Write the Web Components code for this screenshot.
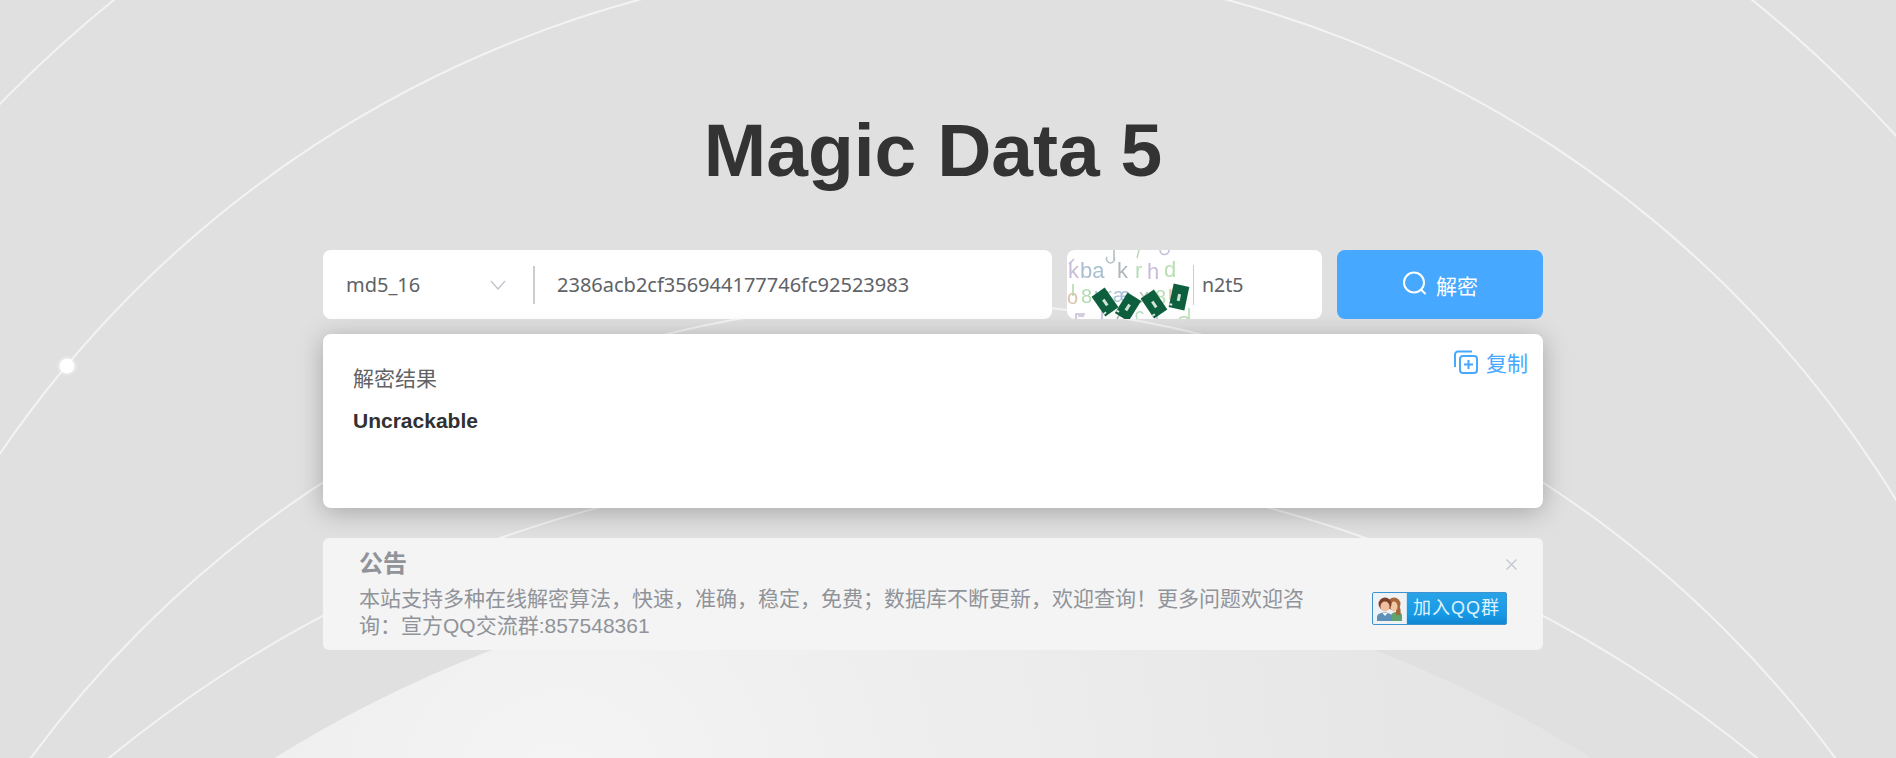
<!doctype html>
<html lang="zh">
  <head>
    <meta charset="UTF-8" />
    <title>Magic Data 5</title>
    <style>
      html, body {
        margin: 0;
        height: 100%;
        overflow: hidden;
        background: #e0e0e0;
      }
    </style>
  </head>
  <body>
    <md-app>
      <md-search-bar></md-search-bar>
      <md-result-card label="解密结果" value="Uncrackable"></md-result-card>
      <md-notice heading="公告">
        本站支持多种在线解密算法，快速，准确，稳定，免费；数据库不断更新，欢迎查询！更多问题欢迎咨询：宣方QQ交流群:857548361
      </md-notice>
    </md-app>

    <script type="module">
      const UI_FONT = `"Noto Sans", "Noto Sans CJK SC", sans-serif`;
      const ARIAL_FONT = `"Liberation Sans", "Noto Sans CJK SC", sans-serif`;

      class MdBackground extends HTMLElement {
        constructor() {
          super();
          this.attachShadow({ mode: "open" });
          this.shadowRoot.innerHTML = `
            <style>
              :host { position: absolute; inset: 0; display: block; z-index: 0; }
              svg { display: block; }
            </style>
            <svg width="1896" height="758" viewBox="0 0 1896 758">
              <defs>
                <radialGradient id="globe" gradientUnits="userSpaceOnUse" cx="560" cy="800" r="1080">
                  <stop offset="0" stop-color="#f4f4f4" />
                  <stop offset="0.45" stop-color="#ececec" />
                  <stop offset="1" stop-color="#e3e3e3" />
                </radialGradient>
              </defs>
              <rect width="1896" height="758" fill="#e0e0e0" />
              <circle cx="933" cy="1810" r="1241" fill="url(#globe)" />
              <g fill="none" stroke="#fff" stroke-opacity="0.62" stroke-width="2">
                <circle cx="933" cy="1012" r="1302" />
                <circle cx="933" cy="1091" r="1130" />
                <circle cx="933" cy="1422" r="1120" />
                <circle cx="933" cy="1766" r="1302" />
              </g>
              <circle cx="67" cy="366" r="10" fill="#fff" fill-opacity="0.22" />
              <circle cx="67" cy="366" r="7.5" fill="#fff" />
            </svg>
          `;
        }
      }

      class MdApp extends HTMLElement {
        constructor() {
          super();
          this.attachShadow({ mode: "open" });
          this.shadowRoot.innerHTML = `
            <style>
              :host {
                display: block;
                position: relative;
                width: 1896px;
                height: 758px;
                overflow: hidden;
              }
              .page {
                position: relative;
                z-index: 1;
                box-sizing: border-box;
                width: 1866px;
                display: flex;
                flex-direction: column;
                align-items: center;
              }
              h1 {
                margin: 108px 0 0;
                height: 142px;
                font: bold 75px/84px ${ARIAL_FONT};
                color: #333;
              }
              .stack {
                width: 1220px;
                display: flex;
                flex-direction: column;
              }
            </style>
            <md-background></md-background>
            <div class="page">
              <h1>Magic Data 5</h1>
              <div class="stack"><slot></slot></div>
            </div>
          `;
        }
      }

      class MdSearchBar extends HTMLElement {
        constructor() {
          super();
          this.attachShadow({ mode: "open" });
          this.shadowRoot.innerHTML = `
            <style>
              :host {
                display: flex;
                gap: 15px;
                height: 69px;
                font: 20px ${UI_FONT};
                color: #606266;
              }
              .box {
                background: #fff;
                border-radius: 8px;
                display: flex;
                align-items: center;
                overflow: hidden;
              }
              .main { width: 729px; }
              .algo {
                width: 212px;
                box-sizing: border-box;
                padding: 0 27px 0 23px;
                display: flex;
                align-items: center;
                justify-content: space-between;
                height: 38px;
                border-right: 2px solid #ccc;
              }
              .hash { padding-left: 22px; white-space: nowrap; }
              .code { width: 255px; }
              .code md-captcha { flex: none; }
              .answer {
                margin-left: 3px;
                padding-left: 8px;
                height: 40px;
                line-height: 40px;
                font-size: 19.5px;
                border-left: 1px solid #ccc;
              }
              .go {
                width: 206px;
                background: #46a8ff;
                color: #fff;
                justify-content: center;
                gap: 9px;
                font-size: 21px;
              }
              .go svg { display: block; margin-top: -3px; }
            </style>
            <div class="box main">
              <div class="algo">
                <span>md5_16</span>
                <svg width="16" height="10" viewBox="0 0 16 10" fill="none" stroke="#c0c4cc" stroke-width="1.3">
                  <path d="M1 1l7 8 7-8" />
                </svg>
              </div>
              <div class="hash">2386acb2cf356944177746fc92523983</div>
            </div>
            <div class="box code">
              <md-captcha></md-captcha>
              <div class="answer">n2t5</div>
            </div>
            <div class="box go">
              <svg width="25" height="25" viewBox="0 0 25 25" fill="none" stroke="#fff" stroke-width="2">
                <circle cx="12" cy="11.5" r="10" />
                <path d="M19.5 19l3.5 3.5" stroke-linecap="round" />
              </svg>
              <span>解密</span>
            </div>
          `;
        }
      }

      class MdCaptcha extends HTMLElement {
        constructor() {
          super();
          this.attachShadow({ mode: "open" });
          // two rows of noise letters, stray strokes at the edges, then the four dark blocks
          const noise = [
            ["k", 1, 28, 22, "#c9bcd8"], ["ba", 13, 28, 22, "#a9bfd0"], ["k", 50, 28, 22, "#b0b8bc"],
            ["r", 68, 28, 22, "#b8dcb8"], ["h", 80, 29, 22, "#c8bcdc"], ["d", 97, 27, 22, "#b8e0b0"],
            ["o", 0, 54, 20, "#d8c4a8"], ["8", 14, 53, 20, "#b0dcb0"], ["u", 27, 52, 20, "#a8bccc"],
            ["r", 38, 52, 20, "#b0c0b0"], ["æ", 46, 52, 20, "#a8c4d8"], ["x", 72, 53, 20, "#b0c8b8"],
            ["8", 88, 54, 20, "#b8e0b0"], ["r", 101, 50, 20, "#d8c8a8"], ["c", 110, 52, 20, "#b8e0c0"]
          ];
          const letters = noise
            .map(([t, x, y, s, c]) => `<text x="${x}" y="${y}" font-size="${s}" fill="${c}">${t}</text>`)
            .join("");
          const strokes = [
            ["M47 0v10M40 7a4 4 0 1 0 7 0", "#b5c0c0"], ["M72 0l-2 8", "#b8dcb8"],
            ["M93 0a4 4 0 0 0 9 0", "#c8bcdc"], ["M9 69v-5h9M11 66h6", "#c8c0d8"],
            ["M35 69v-8", "#c8bcdc"], ["M50 69l5-9", "#b0b8bc"], ["M70 69c-3-8 5-9 6-5", "#b8e0c0"],
            ["M90 69v-9", "#c8bcdc"], ["M112 69c3-3 8-3 9 0M122 69v-11", "#b8e0b0"],
            ["M2 14l5-5", "#c9bcd8"], ["M6 46l0-12", "#b8d8b0"]
          ];
          const bits = strokes
            .map(([d, c]) => `<path d="${d}" fill="none" stroke="${c}" stroke-width="1.6" />`)
            .join("");
          const blocks = [
            [38, 52, -35], [61, 57, 32], [87, 54, -34], [112, 47, 12]
          ];
          const marks = blocks
            .map(([x, y, r]) => `
              <g transform="translate(${x} ${y}) rotate(${r})">
                <rect x="-8" y="-12" width="16" height="24" fill="#0c5f3c" />
                <rect x="-1.500" y="-3" width="3" height="7" fill="#cfe2d7" />
                <rect x="-8" y="8" width="3" height="2" fill="#dce9e1" />
              </g>`)
            .join("");
          this.shadowRoot.innerHTML = `
            <style>
              :host { display: block; width: 123px; height: 69px; overflow: hidden; }
              svg { display: block; font-family: "Liberation Sans", sans-serif; }
            </style>
            <svg width="123" height="69" viewBox="0 0 123 69" aria-hidden="true">
              <defs><filter id="soft"><feGaussianBlur stdDeviation="0.45" /></filter></defs>
              <g filter="url(#soft)">${bits}${letters}${marks}</g>
            </svg>
          `;
        }
      }

      class MdResultCard extends HTMLElement {
        static get observedAttributes() { return ["label", "value"]; }
        constructor() {
          super();
          this.attachShadow({ mode: "open" });
          this.shadowRoot.innerHTML = `
            <style>
              :host {
                display: flex;
                justify-content: space-between;
                box-sizing: border-box;
                height: 174px;
                margin-top: 15px;
                background: #fff;
                border-radius: 8px;
                box-shadow: 0 4px 26px rgba(0, 0, 0, 0.26);
              }
              .body { padding: 29px 30px 0; }
              .label {
                font: 21px/30px ${UI_FONT};
                color: #606266;
              }
              .value {
                margin-top: 13px;
                font: bold 21px/30px ${ARIAL_FONT};
                color: #303133;
              }
              .copy {
                display: flex;
                align-items: center;
                gap: 8px;
                height: 24px;
                margin: 16px 15px 0 0;
                font: 21px ${UI_FONT};
                color: #46a8ff;
              }
              .copy svg { display: block; }
            </style>
            <div class="body">
              <div class="label"></div>
              <div class="value"></div>
            </div>
            <div class="copy">
              <svg width="24" height="24" viewBox="0 0 24 24" fill="none" stroke="#46a8ff" stroke-width="2">
                <path d="M18 1.5H4A3 3 0 0 0 1 4.500V17" />
                <rect x="6" y="6" width="17" height="17" rx="3" />
                <path d="M10 14.500h9M14.500 10v9" />
              </svg>
              <span>复制</span>
            </div>
          `;
        }
        attributeChangedCallback(name, _old, val) {
          this.shadowRoot.querySelector("." + name).textContent = val;
        }
      }

      class MdQqBadge extends HTMLElement {
        constructor() {
          super();
          this.attachShadow({ mode: "open" });
          this.shadowRoot.innerHTML = `
            <style>
              :host {
                display: flex;
                box-sizing: border-box;
                width: 135px;
                height: 33px;
                border: 1px solid #3d93cf;
                border-radius: 2px;
                background: linear-gradient(#2aa3e6, #1699e6 70%, #1285d0);
                overflow: hidden;
                color: #dff2fd;
                font: 18px ${ARIAL_FONT};
              }
              .face {
                width: 33px;
                background: #eef2f5;
                border-right: 1px solid #cfe3f0;
                flex: none;
              }
              .face svg { display: block; }
              .txt {
                flex: 1;
                line-height: 31px;
                padding-left: 6px;
                letter-spacing: 1px;
                white-space: nowrap;
              }
            </style>
            <div class="face">
              <svg width="32" height="31" viewBox="0 0 32 31">
                <path d="M18 28v-5c0-3 3-4 6-4s5 1 5 4v5z" fill="#5fa36f" />
                <circle cx="21" cy="11" r="6.500" fill="#a8653a" />
                <path d="M26 12c2 4 2 8 1 10h-4v-8z" fill="#a8653a" />
                <ellipse cx="21" cy="13.500" rx="3.500" ry="5" fill="#f0c8a4" />
                <path d="M4 28v-4c0-3 4-4.500 7.500-4.500s7.500 1.500 7.500 4.500v4z" fill="#5d8fb8" />
                <circle cx="12" cy="11" r="6.500" fill="#7d4028" />
                <ellipse cx="12" cy="13.500" rx="4.500" ry="5" fill="#f0bfa0" />
                <path d="M9.500 20l2.500 3 2.500-3z" fill="#fff" />
              </svg>
            </div>
            <div class="txt">加入QQ群</div>
          `;
        }
      }

      class MdNotice extends HTMLElement {
        constructor() {
          super();
          this.attachShadow({ mode: "open" });
          this.shadowRoot.innerHTML = `
            <style>
              :host {
                display: flex;
                justify-content: space-between;
                box-sizing: border-box;
                height: 112px;
                margin-top: 30px;
                padding: 11px 26px 0 36px;
                background: #f4f4f4;
                border-radius: 6px;
                color: #909399;
              }
              .copy { width: 958px; }
              .heading {
                font: bold 24px/30px ${ARIAL_FONT};
              }
              .text {
                margin-top: 6px;
                font: 21px/27px ${ARIAL_FONT};
              }
              .side {
                display: flex;
                flex-direction: column;
                align-items: flex-end;
                padding-top: 10px;
              }
              .side svg { display: block; }
              md-qq-badge { margin: 22px 10px 0 0; }
            </style>
            <div class="copy">
              <div class="heading"></div>
              <div class="text"><slot></slot></div>
            </div>
            <div class="side">
              <svg width="11" height="11" viewBox="0 0 11 11" stroke="#c0c4cc" stroke-width="1.1">
                <path d="M0.500 0.500l10 10M10.500 0.500l-10 10" />
              </svg>
              <md-qq-badge></md-qq-badge>
            </div>
          `;
          this.shadowRoot.querySelector(".heading").textContent = this.getAttribute("heading");
        }
      }

      customElements.define("md-background", MdBackground);
      customElements.define("md-captcha", MdCaptcha);
      customElements.define("md-qq-badge", MdQqBadge);
      customElements.define("md-search-bar", MdSearchBar);
      customElements.define("md-result-card", MdResultCard);
      customElements.define("md-notice", MdNotice);
      customElements.define("md-app", MdApp);
    </script>
  </body>
</html>
